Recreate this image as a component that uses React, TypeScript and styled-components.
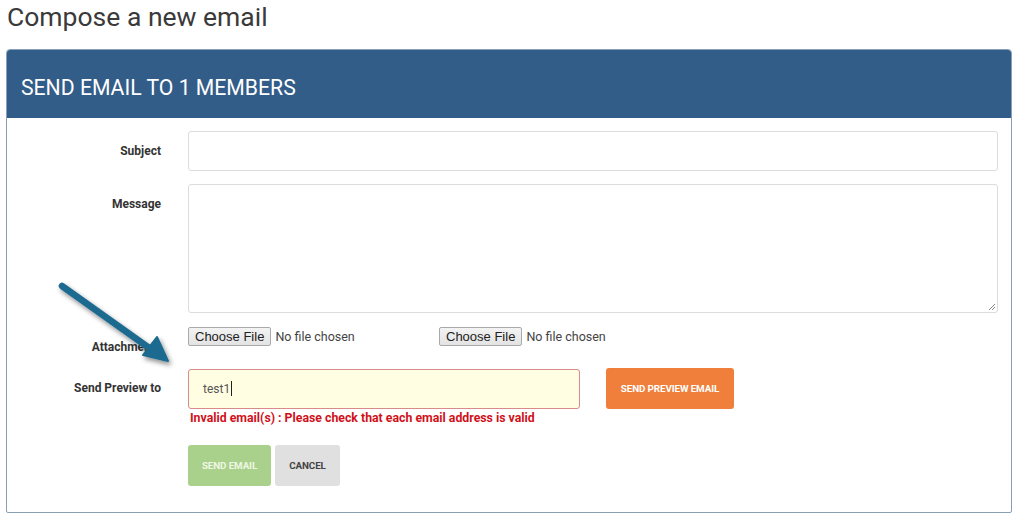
import React from "react";
import styled, { createGlobalStyle } from "styled-components";

const Global = createGlobalStyle`
  html, body { margin: 0; padding: 0; background: #fff; }
  body { font-family: Roboto, "Liberation Sans", Arial, sans-serif; color: #333; }
  * { box-sizing: border-box; }
`;

const Page = styled.div`
  position: relative;
  width: 1024px;
  height: 523px;
  padding: 0 12px 0 6px;
  overflow: hidden;
`;

const Title = styled.h1`
  margin: 0;
  padding: 2px 0 0 1px;
  font-size: 26.5px;
  line-height: 30px;
  font-weight: 400;
  color: #3a3a3a;
`;

const Panel = styled.section`
  margin-top: 17px;
  width: 1006px;
  border: 1px solid #86a0b6;
  border-radius: 4px 4px 2px 2px;
  background: #fff;
`;

const PanelHeader = styled.div`
  height: 68px;
  background: #335d89;
  border-radius: 3px 3px 0 0;
  display: flex;
  align-items: center;
  padding-left: 14px;
  padding-top: 7px;
  color: #fff;
  font-size: 21.2px;
  font-weight: 400;
`;

const PanelBody = styled.div`
  padding: 13px 13px 26px 0;
  display: flex;
  flex-direction: column;
`;

const Row = styled.div<{ $mb: number }>`
  display: grid;
  grid-template-columns: 155px 1fr;
  column-gap: 26px;
  align-items: start;
  margin-bottom: ${(p) => p.$mb}px;
`;

const Label = styled.label`
  text-align: right;
  padding-right: 1px;
  font-size: 12px;
  font-weight: 700;
  line-height: 40px;
  color: #333;
`;

const TextInput = styled.div`
  height: 40px;
  border: 1px solid #dcdcdc;
  border-radius: 3px;
  background: #fff;
`;

const TextArea = styled.div`
  position: relative;
  height: 129px;
  border: 1px solid #dcdcdc;
  border-radius: 3px;
  background: #fff;
`;

const Grip = styled.svg`
  position: absolute;
  right: 1px;
  bottom: 1px;
`;

const FileRow = styled.div`
  display: grid;
  grid-template-columns: 251px auto;
  align-items: center;
  height: 19px;
`;

const FileGroup = styled.div`
  display: flex;
  align-items: center;
  gap: 4px;
`;

const FileButton = styled.button`
  height: 19px;
  padding: 0 6px;
  font-family: "Liberation Sans", Arial, sans-serif;
  font-size: 13px;
  color: #222;
  background: linear-gradient(#f3f3f3, #e3e3e3);
  border: 1px solid #a9a9a9;
  border-radius: 2px;
  line-height: 17px;
`;

const FileStatus = styled.span`
  font-size: 12.5px;
  color: #444;
`;

const PreviewField = styled.div`
  display: flex;
  flex-direction: column;
`;

const PreviewLine = styled.div`
  display: flex;
  align-items: center;
  gap: 26px;
`;

const PreviewInput = styled.div`
  width: 392px;
  height: 40px;
  display: flex;
  align-items: center;
  padding-left: 14px;
  background: #fffee3;
  border: 1px solid #d98a8a;
  border-radius: 3px;
  font-size: 12px;
  color: #555;
`;

const Caret = styled.span`
  display: inline-block;
  width: 1px;
  height: 15px;
  background: #222;
  margin-left: 1px;
`;

const Button = styled.button<{ $bg: string; $fg: string; $w: number }>`
  width: ${(p) => p.$w}px;
  height: 41px;
  border: none;
  border-radius: 3px;
  background: ${(p) => p.$bg};
  color: ${(p) => p.$fg};
  font-family: Roboto, "Liberation Sans", Arial, sans-serif;
  font-size: 9.8px;
  font-weight: 700;
  letter-spacing: -0.1px;
  text-transform: uppercase;
  padding: 0;
`;

const ErrorText = styled.div`
  margin-top: 2px;
  padding-left: 2px;
  font-size: 12.3px;
  font-weight: 700;
  line-height: 14px;
  color: #d0111b;
`;

const Actions = styled.div`
  display: flex;
  gap: 4px;
`;

const Arrow = styled.svg`
  position: absolute;
  left: 0;
  top: 0;
  pointer-events: none;
`;

export default function App() {
  return (
    <>
      <Global />
      <Page>
        <Title>Compose a new email</Title>
        <Panel>
          <PanelHeader>SEND EMAIL TO 1 MEMBERS</PanelHeader>
          <PanelBody>
            <Row $mb={13}>
              <Label>Subject</Label>
              <TextInput />
            </Row>
            <Row $mb={14}>
              <Label>Message</Label>
              <TextArea>
                <Grip width="9" height="9" viewBox="0 0 9 9">
                  <path d="M8 2 L2 8 M8 5 L5 8" stroke="#888" strokeWidth="1" />
                </Grip>
              </TextArea>
            </Row>
            <Row $mb={1}>
              <Label>Attachments</Label>
              <FileRow>
                <FileGroup>
                  <FileButton>Choose File</FileButton>
                  <FileStatus>No file chosen</FileStatus>
                </FileGroup>
                <FileGroup>
                  <FileButton>Choose File</FileButton>
                  <FileStatus>No file chosen</FileStatus>
                </FileGroup>
              </FileRow>
            </Row>
            <Row $mb={20}>
              <Label>Send Preview to</Label>
              <PreviewField>
                <PreviewLine>
                  <PreviewInput>
                    test1
                    <Caret />
                  </PreviewInput>
                  <Button $bg="#f07f3c" $fg="#fff" $w={128}>
                    Send preview email
                  </Button>
                </PreviewLine>
                <ErrorText>
                  Invalid email(s) : Please check that each email address is valid
                </ErrorText>
              </PreviewField>
            </Row>
            <Row $mb={0}>
              <span />
              <Actions>
                <Button $bg="#a9d18b" $fg="#eef7e4" $w={83}>
                  Send email
                </Button>
                <Button $bg="#e0e0e0" $fg="#444" $w={65}>
                  Cancel
                </Button>
              </Actions>
            </Row>
          </PanelBody>
        </Panel>
        <Arrow width="200" height="400" viewBox="0 0 200 400">
          <defs>
            <filter id="sh" x="-20%" y="-20%" width="140%" height="140%">
              <feGaussianBlur in="SourceAlpha" stdDeviation="2.5" />
              <feOffset dx="2" dy="3" result="b" />
              <feComponentTransfer>
                <feFuncA type="linear" slope="0.45" />
              </feComponentTransfer>
              <feMerge>
                <feMergeNode />
                <feMergeNode in="SourceGraphic" />
              </feMerge>
            </filter>
          </defs>
          <g filter="url(#sh)">
            <line x1="62" y1="286" x2="152" y2="350" stroke="#1e6b8f" strokeWidth="6.5" strokeLinecap="round" />
            <path d="M168 361 L143 355 L157 337 Z" fill="#1e6b8f" stroke="#1e6b8f" strokeWidth="2" strokeLinejoin="round" />
          </g>
        </Arrow>
      </Page>
    </>
  );
}
